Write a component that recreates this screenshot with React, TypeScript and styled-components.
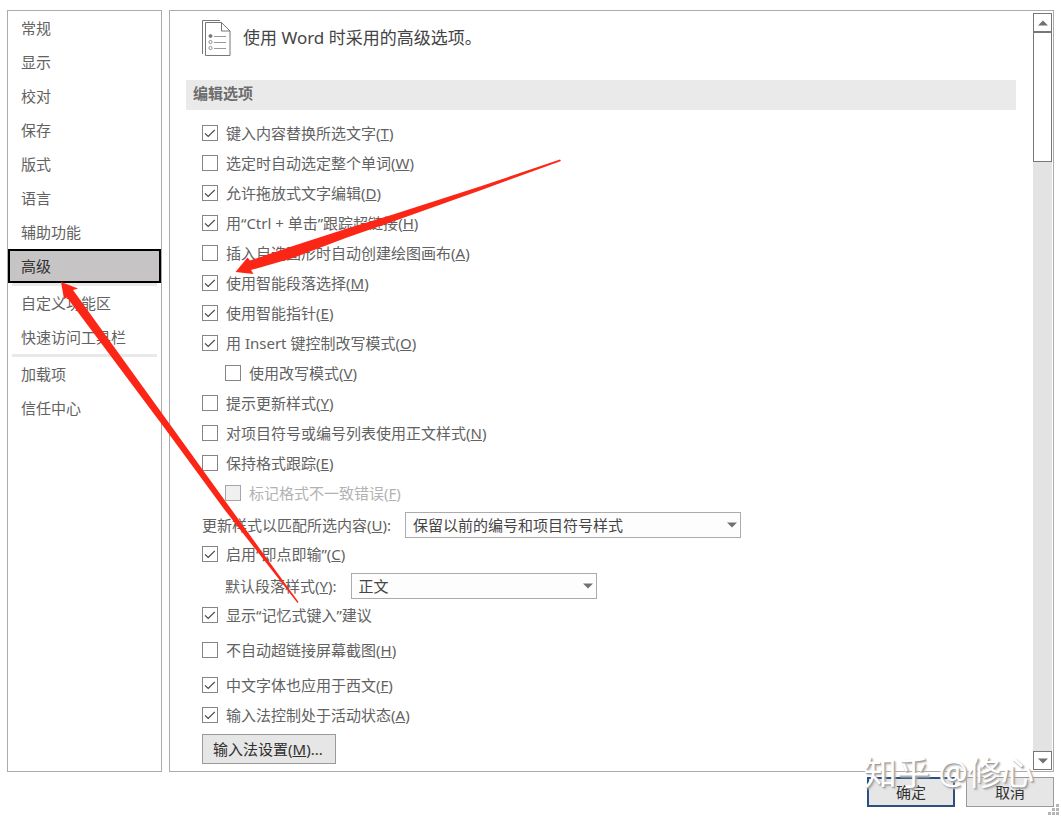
import React from "react";
import styled, { createGlobalStyle } from "styled-components";

const GlobalStyle = createGlobalStyle`
  * { box-sizing: border-box; }
  body {
    margin: 0;
    background: #fff;
    color: #626262;
    font: 15px/20px "Noto Sans", "Noto Sans CJK SC", sans-serif;
  }
  button, select { font: inherit; }
`;

const Dialog = styled.div`
  position: relative;
  padding: 10px 7px;
`;

const Panels = styled.div`
  display: flex;
  gap: 7px;
`;

const Nav = styled.nav`
  flex: none;
  width: 155px;
  border: 1px solid #ababab;
`;

const NavItem = styled.button<{ $active?: boolean }>`
  display: block;
  width: 100%;
  height: 34px;
  padding: 0 11px;
  border: 2px solid ${(p) => (p.$active ? "#000" : "transparent")};
  background: ${(p) => (p.$active ? "#c6c4c4" : "transparent")};
  color: ${(p) => (p.$active ? "#303030" : "#626262")};
  text-align: left;
`;

const Divider = styled.hr`
  height: 3px;
  margin: 0 4px;
  border: 0;
  background: #e9e9e9;
`;

const Main = styled.main`
  flex: 1;
  display: flex;
  min-width: 0;
  border: 1px solid #ababab;
`;

const Content = styled.div`
  flex: 1;
  min-width: 0;
  padding: 8px 16px 7px;
`;

const Header = styled.header`
  display: flex;
  align-items: center;
  gap: 12px;
  height: 38px;
  padding-left: 16px;
  margin-bottom: 23px;
`;

const Title = styled.h1`
  margin: 0;
  font-size: 17px;
  line-height: 24px;
  font-weight: 400;
  color: #444;
`;

const SectionTitle = styled.h2`
  height: 30px;
  margin: 0 0 8px;
  padding: 0 7px;
  background: #eaeaea;
  color: #6c6c6c;
  font-size: 15px;
  line-height: 26px;
  font-weight: 700;
`;

const Options = styled.div`
  padding-left: 16px;
`;

const Group = styled.div`
  margin-bottom: 5px;
`;

const OptionRow = styled.label<{ $indent?: boolean; $disabled?: boolean }>`
  display: flex;
  align-items: center;
  gap: 8px;
  height: 30px;
  padding-left: ${(p) => (p.$indent ? 23 : 0)}px;
  color: ${(p) => (p.$disabled ? "#b2b2b2" : "#626262")};
`;

const Box = styled.span`
  display: grid;
  flex: none;
  width: 16px;
  height: 16px;
  > * { grid-area: 1 / 1; }
  > svg { pointer-events: none; }
`;

const BoxInput = styled.input`
  appearance: none;
  width: 16px;
  height: 16px;
  margin: 0;
  border: 1px solid #858585;
  background: #fff;
  &:disabled { background: #f0f0f0; border-color: #a6a6a6; }
  & + svg { visibility: hidden; }
  &:checked + svg { visibility: visible; }
`;

const ComboRow = styled.div<{ $indent?: boolean }>`
  display: flex;
  align-items: center;
  gap: 14px;
  height: 31px;
  padding: 4px 0 1px ${(p) => (p.$indent ? 23 : 0)}px;
`;

const Combo = styled.span<{ $width: number }>`
  display: grid;
  align-items: center;
  width: ${(p) => p.$width}px;
  > * { grid-area: 1 / 1; }
  > svg { justify-self: end; margin-right: 4px; pointer-events: none; }
`;

const Select = styled.select`
  appearance: none;
  width: 100%;
  height: 26px;
  padding: 0 7px;
  border: 1px solid #ababab;
  border-radius: 0;
  background: #fdfdfd;
  color: #444;
`;

const PushButton = styled.button<{ $primary?: boolean }>`
  height: 30px;
  min-width: 88px;
  padding: 0 10px;
  border: ${(p) => (p.$primary ? "2px solid #2b4f81" : "1px solid #9a9a9a")};
  background: #e6e6e6;
  color: #303030;
`;

const ImeButton = styled(PushButton)`
  display: block;
  min-width: 134px;
  margin-top: 4px;
  text-align: left;
`;

const Scrollbar = styled.div`
  display: flex;
  flex-direction: column;
  flex: none;
  width: 19px;
  margin: 2px 1px 1px;
  background: #e3e3e3;
`;

const ScrollButton = styled.button`
  display: grid;
  place-items: center;
  height: 19px;
  padding: 0;
  border: 1px solid #777;
  background: #fff;
`;

const Thumb = styled.div`
  height: 130px;
  margin-bottom: auto;
  border: 1px solid #777;
  background: #fff;
`;

const Footer = styled.footer`
  display: flex;
  justify-content: flex-end;
  gap: 11px;
  padding-top: 5px;
`;

const Grip = styled.svg`
  position: absolute;
  right: 1px;
  bottom: 1px;
`;

const Watermark = styled.div`
  position: absolute;
  right: 27px;
  bottom: 26px;
  color: #fff;
  font-size: 33px;
  line-height: 36px;
  text-shadow: 1px 1px 1px #999, 2px 2px 2px #bbb;
  pointer-events: none;
`;

const Annotations = styled.svg`
  position: absolute;
  top: 0;
  left: 0;
  pointer-events: none;
`;

function Triangle({ up }: { up?: boolean }) {
  return (
    <svg width="10" height="6" viewBox="0 0 10 6" aria-hidden="true">
      <path d={up ? "M0 5.5 5 .5l5 5z" : "M0 .5h10l-5 5z"} fill="#707070" />
    </svg>
  );
}

function Label({ text, k, end = "" }: { text: string; k?: string; end?: string }) {
  return (
    <span>
      {text}
      {k && <>(<u>{k}</u>)</>}
      {end}
    </span>
  );
}

type OptionProps = { text: string; k?: string; on?: boolean; indent?: boolean; disabled?: boolean };

function Option({ text, k, on, indent, disabled }: OptionProps) {
  return (
    <OptionRow $indent={indent} $disabled={disabled}>
      <Box>
        <BoxInput type="checkbox" defaultChecked={on} disabled={disabled} />
        <svg width="16" height="16" viewBox="0 0 16 16" aria-hidden="true">
          <path d="M3 8.3 6.2 11.5 12.8 4.8" fill="none" stroke="#444" strokeWidth="1.2" />
        </svg>
      </Box>
      <Label text={text} k={k} />
    </OptionRow>
  );
}

type ComboFieldProps = { id: string; text: string; k: string; width: number; value: string; indent?: boolean };

function ComboField({ id, text, k, width, value, indent }: ComboFieldProps) {
  return (
    <ComboRow $indent={indent}>
      <label htmlFor={id}>
        <Label text={text} k={k} end=":" />
      </label>
      <Combo $width={width}>
        <Select id={id}>
          <option>{value}</option>
        </Select>
        <Triangle />
      </Combo>
    </ComboRow>
  );
}

const navGroups = [
  ["常规", "显示", "校对", "保存", "版式", "语言", "辅助功能", "高级"],
  ["自定义功能区", "快速访问工具栏"],
  ["加载项", "信任中心"],
];

const editing: OptionProps[] = [
  { text: "键入内容替换所选文字", k: "T", on: true },
  { text: "选定时自动选定整个单词", k: "W" },
  { text: "允许拖放式文字编辑", k: "D", on: true },
  { text: "用“Ctrl + 单击”跟踪超链接", k: "H", on: true },
  { text: "插入自选图形时自动创建绘图画布", k: "A" },
  { text: "使用智能段落选择", k: "M", on: true },
  { text: "使用智能指针", k: "E", on: true },
  { text: "用 Insert 键控制改写模式", k: "O", on: true },
  { text: "使用改写模式", k: "V", indent: true },
  { text: "提示更新样式", k: "Y" },
  { text: "对项目符号或编号列表使用正文样式", k: "N" },
  { text: "保持格式跟踪", k: "E" },
  { text: "标记格式不一致错误", k: "F", indent: true, disabled: true },
];

export default function App() {
  return (
    <Dialog>
      <GlobalStyle />
      <Panels>
        <Nav>
          {navGroups.map((group, i) => (
            <React.Fragment key={i}>
              {i > 0 && <Divider />}
              {group.map((name) => (
                <NavItem key={name} $active={name === "高级"}>{name}</NavItem>
              ))}
            </React.Fragment>
          ))}
        </Nav>
        <Main>
          <Content>
            <Header>
              <svg width="29" height="38" viewBox="0 0 29 38" fill="none" stroke="#777" aria-hidden="true">
                <path d="M.5 35V1.500H18" />
                <path d="M3.500 3.500H19.500L28 12V36.500H3.500Z" fill="#fff" />
                <path d="M19.500 3.500V12H28" />
                <path d="M12 17.500H24M12 23.500H24M12 29.500H24" stroke="#999" />
                <circle cx="8.500" cy="17" r="1.500" fill="#777" />
                <circle cx="8.500" cy="23" r="1.600" strokeWidth=".8" />
                <circle cx="8.500" cy="29" r="1.600" strokeWidth=".8" />
              </svg>
              <Title>使用 Word 时采用的高级选项。</Title>
            </Header>
            <SectionTitle>编辑选项</SectionTitle>
            <Options>
              <Group>
                {editing.map((o) => <Option key={o.text} {...o} />)}
                <ComboField id="match" text="更新样式以匹配所选内容" k="U" width={336} value="保留以前的编号和项目符号样式" />
                <Option text="启用“即点即输”" k="C" on />
                <ComboField id="para" text="默认段落样式" k="Y" width={246} value="正文" indent />
                <Option text="显示“记忆式键入”建议" on />
              </Group>
              <Group>
                <Option text="不自动超链接屏幕截图" k="H" />
              </Group>
              <Option text="中文字体也应用于西文" k="F" on />
              <Option text="输入法控制处于活动状态" k="A" on />
              <ImeButton><Label text="输入法设置" k="M" end="..." /></ImeButton>
            </Options>
          </Content>
          <Scrollbar>
            <ScrollButton aria-label="向上滚动"><Triangle up /></ScrollButton>
            <Thumb />
            <ScrollButton aria-label="向下滚动"><Triangle /></ScrollButton>
          </Scrollbar>
        </Main>
      </Panels>
      <Footer>
        <PushButton $primary>确定</PushButton>
        <PushButton>取消</PushButton>
      </Footer>
      <Grip width="12" height="12" fill="#b5b5b5" aria-hidden="true">
        <path d="M8 0h3v3h-3zM4 4h3v3h-3zM8 4h3v3h-3zM0 8h3v3h-3zM4 8h3v3h-3zM8 8h3v3h-3z" />
      </Grip>
      <Watermark>知乎 @修心</Watermark>
      <Annotations width="600" height="620" fill="#fb2616" aria-hidden="true">
        <path d="M560 159.500 480 186.500 393 214.500 347 228.500 293 246 250 260.500 247.500 257.500 235.500 272 253.500 274 251 270 293 258 347 237.500 393 221.500 480 190.500 561 161Z" />
        <path d="M61 282 64 299 67 297.500 166 430 224 509 297.500 603 298.500 602 231 509 174 430 73 290 78 288.500Z" />
      </Annotations>
    </Dialog>
  );
}
